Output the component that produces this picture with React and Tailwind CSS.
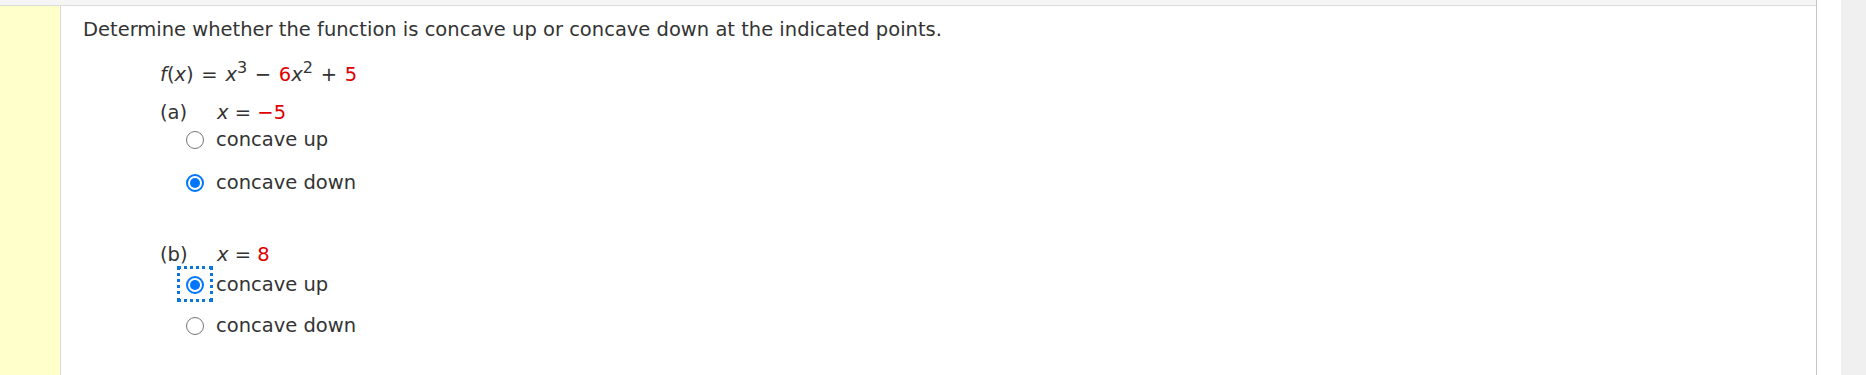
import React from "react";

const Red = ({ children }) => <span className="text-[#e00000]">{children}</span>;

const Radio = ({ checked }) =>
  checked ? (
    <span className="flex h-[18px] w-[18px] items-center justify-center rounded-full border-2 border-[#0075ff] bg-white">
      <span className="h-[10px] w-[10px] rounded-full bg-[#0075ff]" />
    </span>
  ) : (
    <span className="h-[18px] w-[18px] rounded-full border-[1.5px] border-[#767676] bg-white" />
  );

const Option = ({ label, checked, focused }) => (
  <div className="flex h-[26px] items-center pl-[103px]">
    <span className="relative flex h-[18px] w-[18px]">
      <Radio checked={checked} />
      {focused && (
        <span className="pointer-events-none absolute -left-[9px] -top-[10px] h-[36px] w-[36px] border-[3px] border-dotted border-[#0a74df]" />
      )}
    </span>
    <span className="ml-[12px]">{label}</span>
  </div>
);

export default function App() {
  return (
    <div className="flex h-[375px] w-[1866px] overflow-hidden bg-white font-['Verdana','DejaVu_Sans',sans-serif] text-[19.5px] text-[#333333]">
      <div className="flex w-[1817px] flex-col border-r border-[#c6c6c6]">
        <div className="h-[6px] border-b border-[#dcdcdc] bg-[#f5f5f5]" />
        <div className="flex flex-1">
          <div className="w-[61px] border-r border-[#dadada] bg-[#ffffcc]" />
          <div className="flex-1 pl-[22px] leading-[26px]">
            <p className="mt-[11px] h-[26px] whitespace-nowrap">
              Determine whether the function is concave up or concave down at the indicated points.
            </p>

            <p className="mt-[19px] h-[26px] whitespace-nowrap pl-[77px] [word-spacing:1.5px]">
              <i>f</i>(<i>x</i>) = <i>x</i>
              <sup className="text-[16px]">3</sup> − <Red>6</Red>
              <i>x</i>
              <sup className="text-[16px]">2</sup> + <Red>5</Red>
            </p>

            <div className="mt-[12.3px] flex h-[26px] pl-[77px]">
              <span className="w-[57px]">(a)</span>
              <span>
                <i>x</i> = <Red>−5</Red>
              </span>
            </div>
            <div className="mt-[0.7px]">
              <Option label="concave up" />
            </div>
            <div className="mt-[17.3px]">
              <Option label="concave down" checked />
            </div>

            <div className="mt-[46px] flex h-[26px] pl-[77px]">
              <span className="w-[57px]">(b)</span>
              <span>
                <i>x</i> = <Red>8</Red>
              </span>
            </div>
            <div className="mt-[3.7px]">
              <Option label="concave up" checked focused />
            </div>
            <div className="mt-[15.3px]">
              <Option label="concave down" />
            </div>
          </div>
        </div>
      </div>
      <div className="w-[24px] bg-white" />
      <div className="flex-1 bg-[#f0f0f0]" />
    </div>
  );
}
